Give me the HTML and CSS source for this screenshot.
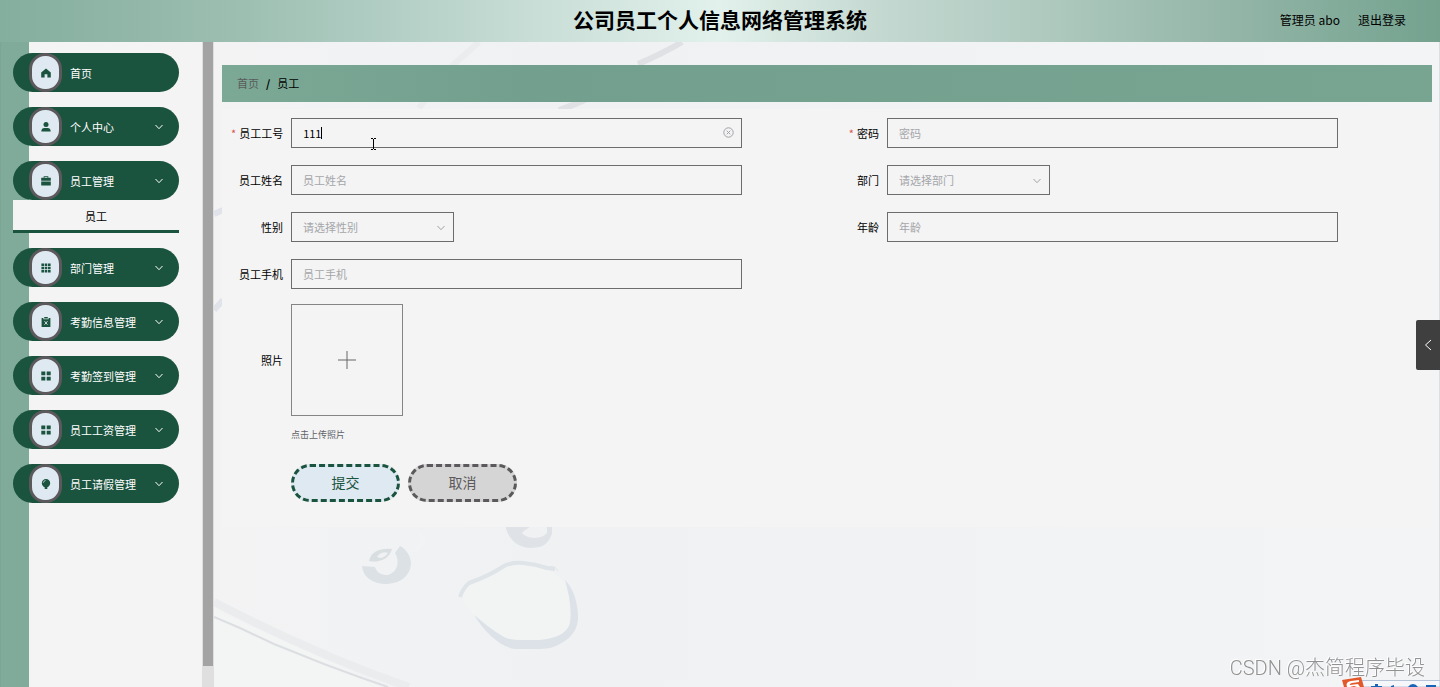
FILE: index.html
```html
<!DOCTYPE html>
<html lang="zh-CN">
  <head>
    <meta charset="UTF-8" />
    <meta name="viewport" content="width=device-width, initial-scale=1.0" />
    <title>公司员工个人信息网络管理系统</title>
    <link rel="stylesheet" href="styles.css">
  </head>
  <body>
    <svg class="icon-defs" aria-hidden="true">
      <symbol id="arrow-down" viewBox="0 0 10 10"><path d="M1.5 3l3.5 3.7L8.500 3" fill="none" stroke="currentColor" stroke-width="1" /></symbol>
      <symbol id="icon-home" viewBox="0 0 10 10"><path d="M5 .4L.2 4.400V9.500H3.600V6.300h2.800v3.200h3.400V4.400z" /></symbol>
      <symbol id="icon-user" viewBox="0 0 10 10"><circle cx="5" cy="2.600" r="2.500" /><path d="M.4 9.600V8.400a2.600 2.600 0 0 1 2.600-2.500h4a2.600 2.600 0 0 1 2.600 2.500v1.200z" /></symbol>
      <symbol id="icon-case" viewBox="0 0 10 10"><path d="M2.700 1.800V.3h4.600v1.500h2.500v2.900H.2V1.800zm.8 0h3V1.100h-3zM.2 5.400h9.600v4H.2z" /></symbol>
      <symbol id="icon-grid" viewBox="0 0 10 10"><path d="M.4.4h2.600v2.600H.4zM3.700.4h2.600v2.600H3.700zM7 .4h2.600v2.600H7zM.4 3.700h2.600v2.600H.4zM3.700 3.700h2.600v2.600H3.700zM7 3.700h2.600v2.600H7zM.4 7h2.600v2.600H.4zM3.700 7h2.600v2.600H3.700zM7 7h2.600v2.600H7z" /></symbol>
      <symbol id="icon-clip" viewBox="0 0 10 10"><path d="M.6 1h1.800v1.300h5.200V1h1.800v8.900H.6z" /><path d="M3.200 0h3.600v1.500H3.200z" /><path d="M3.500 4.200l3 3.500m0-3.500l-3 3.500" stroke="#dfe9f1" stroke-width=".9" /></symbol>
      <symbol id="icon-menu" viewBox="0 0 10 10"><path d="M.3.500h4v3.800h-4zM5.700.500h4v3.800h-4zM.3 5.700h4v3.800h-4zM5.700 5.700h4v3.800h-4z" /></symbol>
      <symbol id="icon-bulb" viewBox="0 0 10 10"><path d="M5 0a4.200 4.200 0 0 0-4.200 4.200c0 2 1.500 3.300 2.900 4.100V10h2.600V8.300C7.700 7.500 9.200 6.200 9.200 4.200A4.200 4.200 0 0 0 5 0z" /><path d="M2.300 3.800A2.600 2.600 0 0 1 4.600 1.500" fill="none" stroke="#dfe9f1" stroke-width=".7" /></symbol>
    </svg>

    <header class="header">
      <h1 class="title">公司员工个人信息网络管理系统</h1>
      <div class="user-bar">
        <span>管理员 abo</span>
        <a href="#">退出登录</a>
      </div>
    </header>

    <div class="layout">
      <aside class="sidebar">
        <nav class="menu">
          <a class="menu-item" href="#"><span class="menu-icon"><svg><use href="#icon-home" /></svg></span>首页</a>
          <button class="menu-item" type="button"><span class="menu-icon"><svg><use href="#icon-user" /></svg></span>个人中心<svg class="arrow"><use href="#arrow-down" /></svg></button>
          <div class="menu-group">
            <button class="menu-item" type="button"><span class="menu-icon"><svg><use href="#icon-case" /></svg></span>员工管理<svg class="arrow"><use href="#arrow-down" /></svg></button>
            <a class="submenu-item" href="#">员工</a>
          </div>
          <button class="menu-item" type="button"><span class="menu-icon"><svg><use href="#icon-grid" /></svg></span>部门管理<svg class="arrow"><use href="#arrow-down" /></svg></button>
          <button class="menu-item" type="button"><span class="menu-icon"><svg><use href="#icon-clip" /></svg></span>考勤信息管理<svg class="arrow"><use href="#arrow-down" /></svg></button>
          <button class="menu-item" type="button"><span class="menu-icon"><svg><use href="#icon-menu" /></svg></span>考勤签到管理<svg class="arrow"><use href="#arrow-down" /></svg></button>
          <button class="menu-item" type="button"><span class="menu-icon"><svg><use href="#icon-menu" /></svg></span>员工工资管理<svg class="arrow"><use href="#arrow-down" /></svg></button>
          <button class="menu-item" type="button"><span class="menu-icon"><svg><use href="#icon-bulb" /></svg></span>员工请假管理<svg class="arrow"><use href="#arrow-down" /></svg></button>
        </nav>
        <div class="scroll-track"><div class="scroll-thumb"></div></div>
      </aside>

      <main class="main">
        <svg class="backdrop" viewBox="0 0 1226 645" preserveAspectRatio="xMinYMin slice" aria-hidden="true">
          <defs>
            <linearGradient id="base" x1="0" x2="1" y1="0" y2="0">
              <stop offset="0" stop-color="#f3f3f4" />
              <stop offset=".3" stop-color="#eff1f3" />
              <stop offset="1" stop-color="#f3f4f5" />
            </linearGradient>
          </defs>
          <rect width="1226" height="645" fill="url(#base)" />
          <path d="M0 568L172 645H0z" fill="#f3f4f4" />
          <g fill="none">
            <path d="M0 560Q100 612 195 645" stroke="#eaecee" stroke-width="8" />
            <path d="M0 575L26 586L60 602L110 622L148 636L174 645" stroke="#dcdfe2" stroke-width="2" />
            <path d="M205 66L240 22L265 0" stroke="#ebecee" stroke-width="6" />
            <path d="M345 68Q375 58 392 46M424 22Q448 12 468 0" stroke="#dfe1e5" stroke-width="6" />
            <path d="M0 172L9 168M0 268L9 258" stroke="#e0e3e9" stroke-width="6" />
          </g>
          <path d="M246 555L254 541L298 521L333 526L351 540L359 568L358 585L344 596L319 602L296 601L276 590L261 576z" fill="#f2f4f4" />
          <path d="M246 555Q249 546 255 541Q275 534 290 524Q298 520 309 521Q321 522 333 526L341 527" fill="none" stroke="#dfe4e8" stroke-width="4" />
          <path d="M335 525Q341 523 344 529" fill="none" stroke="#e3e6e9" stroke-width="1" />
          <path d="M351 538C360 547 364 562 364 575C364 590 354 598 344 603C337 607 329 607 319 607H301C287 605 272 592 260 573C269 580 279 589 290 595C298 599 308 598 324 598C340 597 354 592 356 580C358 567 355 552 351 538z" fill="#dde2e8" />
          <path d="M186 503C194 515 212 510 212 496L198 478C214 496 202 514 188 506z" fill="#f1f3f4" />
          <path d="M148 524C149 536 160 542 173 542C187 541 196 534 197 522C197 514 192 507 186 504L181 511C186 519 184 530 174 533C167 533 163 531 161 525z" fill="#dce1e6" />
          <path d="M155 519C157 509 167 506 178 507C175 518 163 521 155 519z" fill="#d9dee1" />
          <path d="M163 515C165 511 171 509 174 511C170 516 167 517 163 515z" fill="#eff1f3" />
          <path d="M292 487V484H317C312 488 309 489 308 491C313 497 327 498 333 491V485H338V492C334 503 327 506 317 506C305 506 296 499 292 487z" fill="#dfe3e8" />
        </svg>

        <nav class="breadcrumb">
          <a href="#">首页</a>
          <b>/</b>
          <span>员工</span>
        </nav>

        <form class="panel">
          <div class="fields">
            <div class="field">
              <label for="jobNo"><i>*</i>员工工号</label>
              <div class="control">
                <input type="text" id="jobNo" value="111" />
                <span class="caret"></span>
                <svg class="clear" viewBox="0 0 11 11"><circle cx="5.500" cy="5.500" r="4.700" /><path d="M3.700 3.700l3.600 3.600m0-3.600L3.700 7.300" /></svg>
                <svg class="pointer" viewBox="0 0 5 12"><path d="M0 .5h2m1 0h2M0 11.500h2m1 0h2M2.500 1v10" /></svg>
              </div>
            </div>
            <div class="field">
              <label for="password"><i>*</i>密码</label>
              <div class="control"><input type="password" id="password" placeholder="密码" /></div>
            </div>
            <div class="field">
              <label for="staffName">员工姓名</label>
              <div class="control"><input type="text" id="staffName" placeholder="员工姓名" /></div>
            </div>
            <div class="field">
              <label for="dept">部门</label>
              <div class="control select">
                <select id="dept"><option>请选择部门</option></select>
                <svg class="arrow"><use href="#arrow-down" /></svg>
              </div>
            </div>
            <div class="field">
              <label for="gender">性别</label>
              <div class="control select">
                <select id="gender"><option>请选择性别</option></select>
                <svg class="arrow"><use href="#arrow-down" /></svg>
              </div>
            </div>
            <div class="field">
              <label for="age">年龄</label>
              <div class="control"><input type="text" id="age" placeholder="年龄" /></div>
            </div>
            <div class="field">
              <label for="phone">员工手机</label>
              <div class="control"><input type="text" id="phone" placeholder="员工手机" /></div>
            </div>
          </div>

          <div class="field photo">
            <label for="photo">照片</label>
            <label class="upload">
              <input type="file" id="photo" />
              <svg viewBox="0 0 18 18"><path d="M9 0v18M0 9h18" /></svg>
            </label>
          </div>
          <p class="tip">点击上传照片</p>

          <div class="actions">
            <button class="btn submit" type="submit">提交</button>
            <button class="btn cancel" type="button">取消</button>
          </div>
        </form>
      </main>
    </div>

    <button class="drawer" type="button" aria-label="展开"><svg viewBox="0 0 8 12"><path d="M7 1L1.500 6 7 11" /></svg></button>

    <!-- input method bar peeking in from the bottom edge -->
    <svg class="ime" viewBox="0 0 98 10" aria-hidden="true">
      <path d="M20 10V3.500H98V10z" fill="#f5f7fb" stroke="#b7c4d8" />
      <path d="M0 3L19 0L22 10H2z" fill="#e2582b" />
      <path d="M5 10Q3 5 9 4L17 3V5L10 6Q7 7 8 8L16 7L18 10H15L12 9L8 10z" fill="#fff" />
      <path d="M29 9h4V7h3v2h4v1H29zM49 9l3-1v2h-3zM66 10q2-3 5-3t5 3zM84 8h10v2H84z" fill="#1763b5" />
    </svg>
    <div class="watermark">CSDN @杰简程序毕设</div>
  </body>
</html>
```
FILE: styles.css
```css
* {
  box-sizing: border-box;
}
body {
  margin: 0;
  min-height: 100vh;
  display: flex;
  flex-direction: column;
  overflow: hidden;
  font-family: "Noto Sans CJK SC", sans-serif;
  font-size: 11px;
  color: #000;
  background: #f4f4f4;
}
a {
  color: inherit;
  text-decoration: none;
}
button,
input,
select {
  font: inherit;
}
.icon-defs {
  display: none;
}

/* header */
.header {
  display: grid;
  grid-template-columns: 1fr auto 1fr;
  align-items: center;
  height: 42px;
  padding: 0 34px 4px;
  background: linear-gradient(to right, #84ae9d, #9dbfb2 17%, #cadfd8 38%, #e2f1eb 50%, #c2d7cf 62%, #b0cac0 72%, #94b6a8 85%, #74a28f);
}
.title {
  grid-column: 2;
  margin: 0;
  font-size: 21px;
  line-height: 38px;
}
.user-bar {
  display: flex;
  justify-content: flex-end;
  gap: 18px;
  font-size: 12px;
}

/* sidebar */
.layout {
  flex: 1;
  display: flex;
}
.sidebar {
  display: flex;
  flex: 0 0 214px;
  background: linear-gradient(to right, #7ba595 1px, #80ab9a 1px, #80ab9a 29px, #f4f4f4 29px);
}
.menu {
  display: flex;
  flex: 1;
  flex-direction: column;
  gap: 15px;
  padding: 11px 23px 11px 13px;
}
.menu-item {
  display: flex;
  align-items: center;
  width: 100%;
  height: 39px;
  padding: 0 15px 0 16px;
  border: none;
  border-radius: 20px;
  background: #1a533e;
  color: #fff;
  cursor: pointer;
}
.menu-icon {
  display: flex;
  align-items: center;
  justify-content: center;
  width: 33px;
  height: 39px;
  margin-right: 8px;
  border: 3px solid #5b595b;
  border-radius: 16px;
  background: #dfe9f1;
}
.menu-icon svg {
  width: 10px;
  height: 10px;
  fill: #1a533e;
}
.arrow {
  width: 10px;
  height: 10px;
}
.menu-item .arrow {
  margin-left: auto;
}
.submenu-item {
  display: block;
  height: 33px;
  border-bottom: 3px solid #1a533e;
  background: #f4f4f4;
  line-height: 32px;
  text-align: center;
}
.scroll-track {
  width: 12px;
  padding: 0 1px;
  background: #dfdfdf;
}
.scroll-thumb {
  height: calc(100% - 21px);
  background: #a3a3a3;
}

/* content */
.main {
  position: relative;
  flex: 1;
  padding: 23px 7px 23px 8px;
  border-right: 1px solid #dcdee0;
}
.backdrop {
  position: absolute;
  top: 0;
  left: 0;
  width: 100%;
  height: 100%;
}
.breadcrumb {
  position: relative;
  display: flex;
  align-items: center;
  gap: 7px;
  height: 37px;
  padding: 0 15px 2px;
  background: linear-gradient(to right, #7ba996, #73a08e 25%, #77a592);
}
.breadcrumb a {
  color: #5b5b5b;
}
.panel {
  position: relative;
  margin-top: 7px;
  padding: 9px 9px 25px;
  background: #f4f4f4;
}
.fields {
  display: grid;
  grid-template-columns: 1fr 1fr;
  row-gap: 17px;
}
.field {
  display: flex;
  align-items: center;
}
.field > label:first-child {
  flex: 0 0 60px;
  padding-right: 8px;
  text-align: right;
  white-space: nowrap;
}
.field i {
  margin-right: 3px;
  color: #d9534f;
  font-style: normal;
}
.control {
  position: relative;
}
.field .control {
  flex: 0 1 451px;
}
.field .select {
  flex: 0 0 163px;
}
.control input,
.control select {
  display: block;
  width: 100%;
  height: 30px;
  padding: 0 11px;
  border: 1px solid #6c6c6e;
  border-radius: 0;
  outline: none;
  background: #f4f4f4;
  color: #000;
}
.control select {
  appearance: none;
  color: #a4a6aa;
}
.control input::placeholder {
  color: #a4a6aa;
}
.select .arrow {
  position: absolute;
  top: 11px;
  right: 8px;
  color: #a0a2a6;
  pointer-events: none;
}
.caret {
  position: absolute;
  top: 9px;
  left: 30px;
  width: 1px;
  height: 12px;
  background: #000;
}
.clear {
  position: absolute;
  top: 9px;
  right: 8px;
  width: 11px;
  height: 11px;
  fill: none;
  stroke: #a0a2a6;
}
.pointer {
  position: absolute;
  top: 20px;
  left: 80px;
  width: 5px;
  height: 12px;
  stroke: #000;
}
.photo {
  margin-top: 15px;
}
.upload {
  display: flex;
  align-items: center;
  justify-content: center;
  width: 112px;
  height: 112px;
  border: 1px solid #858585;
  cursor: pointer;
}
.upload input {
  position: absolute;
  width: 1px;
  height: 1px;
  opacity: 0;
}
.upload svg {
  width: 18px;
  height: 18px;
  stroke: #666;
}
.tip {
  margin: 11px 0 0 60px;
  color: #606266;
  font-size: 9px;
  line-height: 16px;
}
.actions {
  display: flex;
  gap: 8px;
  margin: 21px 0 0 60px;
}
.btn {
  width: 109px;
  height: 38px;
  padding: 0 0 2px;
  border: 3px dashed #1a533e;
  border-radius: 20px;
  background: #dfe9f1;
  color: #1a533e;
  font-size: 14px;
  cursor: pointer;
}
.btn.cancel {
  border-color: #5b595b;
  background: #d5d5d5;
  color: #5b595b;
}

/* floating pieces */
.drawer {
  position: fixed;
  top: 320px;
  right: 0;
  display: flex;
  align-items: center;
  justify-content: center;
  width: 24px;
  height: 50px;
  padding: 0;
  border: none;
  border-radius: 2px 0 0 2px;
  background: #3f3f3f;
}
.drawer svg {
  width: 8px;
  height: 12px;
  fill: none;
  stroke: #fff;
}
.ime {
  position: fixed;
  right: 0;
  bottom: 0;
  width: 98px;
  height: 10px;
}
.watermark {
  position: fixed;
  right: 15px;
  bottom: 5px;
  color: #929292;
  font-family: Roboto, "Noto Sans CJK SC", sans-serif;
  font-size: 20px;
  font-weight: 300;
  line-height: 28px;
  text-shadow: -1px -1px 0 #fff;
}
```
